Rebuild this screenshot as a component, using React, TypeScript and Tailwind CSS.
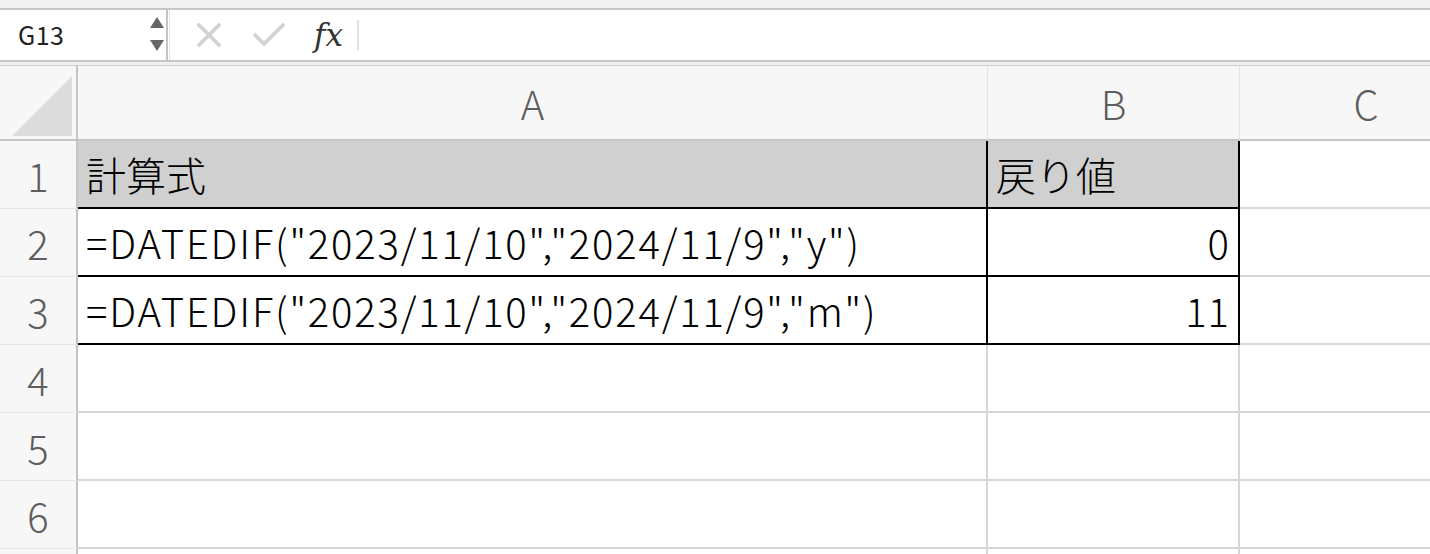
import React from 'react'

const FONT = "font-['Noto_Sans_CJK_JP','Noto_Sans',sans-serif]"

const ROWS: { n: string; a: string; b: string; header?: boolean; boxed?: boolean; right?: boolean }[] = [
  { n: '1', a: '計算式', b: '戻り値', header: true, boxed: true },
  { n: '2', a: '=DATEDIF("2023/11/10","2024/11/9","y")', b: '0', boxed: true, right: true },
  { n: '3', a: '=DATEDIF("2023/11/10","2024/11/9","m")', b: '11', boxed: true, right: true },
  { n: '4', a: '', b: '' },
  { n: '5', a: '', b: '' },
  { n: '6', a: '', b: '' },
  // row 7 only peeks in at the bottom edge
  { n: '', a: '', b: '' },
]

function FormulaBar() {
  return (
    <div className="flex h-[54px] border-t-2 border-b-2 border-[#c6c6c6] bg-white">
      {/* Name box */}
      <div className="flex w-[166px] items-center justify-between pl-[18px] pr-[2px]">
        <span className={`${FONT} text-[25px] tracking-[0.5px] text-[#222]`}>G13</span>
        <svg width="14" height="36" viewBox="0 0 14 36" className="text-[#666]">
          <path d="M7 0 L14 11 L0 11 Z" fill="currentColor" />
          <path d="M0 23 L14 23 L7 34 Z" fill="currentColor" />
        </svg>
      </div>
      <div className="w-[4px] border-l-2 border-r border-[#c4c4c4] border-r-[#e2e2e2]" />
      {/* Buttons */}
      <div className="flex items-center pl-[27px]">
        <svg width="24" height="24" viewBox="0 0 24 24" className="text-[#d2d2d2]">
          <path d="M2 2 L22 22 M22 2 L2 22" stroke="currentColor" strokeWidth="3.8" strokeLinecap="round" />
        </svg>
        <svg width="32" height="24" viewBox="0 0 32 24" className="ml-[32px] text-[#d2d2d2]">
          <path d="M2 12 L11 21 L30 2" stroke="currentColor" strokeWidth="3.8" strokeLinecap="round" strokeLinejoin="round" fill="none" />
        </svg>
        <span className="ml-[29px] font-['DejaVu_Serif','Liberation_Serif',serif] text-[31px] italic leading-none text-[#333]">fx</span>
        <div className="ml-[14px] h-[30px] w-[2px] bg-[#e0e0e0]" />
      </div>
      <div className="flex-1" />
    </div>
  )
}

function Corner() {
  return (
    <div className="flex items-end justify-end border-r-2 border-b-2 border-[#c4c4c4] bg-[#f7f7f7] pb-[3px] pr-[4px]">
      <svg width="60" height="60" viewBox="0 0 60 60">
        <path d="M0 60 L60 60 L60 0 Z" fill="#dcdcdc" />
      </svg>
    </div>
  )
}

export default function App() {
  return (
    <div className="h-[554px] w-[1430px] overflow-hidden bg-white">
      <div className="h-[8px] bg-[#f2f2f2]" />
      <FormulaBar />
      <div className="h-[4px] border-b border-[#cfcfcf] bg-[#efefef]" />

      <div className={`grid grid-cols-[78px_910px_252px_252px] grid-rows-[75px_repeat(7,68px)] font-light ${FONT}`}>
        <Corner />
        {['A', 'B', 'C'].map((c, i) => (
          <div
            key={c}
            className={`flex items-center justify-center border-b-2 border-[#c6c6c6] bg-[#f7f7f7] text-[40px] text-[#5e5e5e] ${
              i < 2 ? 'border-r border-r-[#e4e4e4]' : ''
            }`}
          >
            {c}
          </div>
        ))}

        {ROWS.map((r, i) => (
          <React.Fragment key={i}>
            <div className="flex items-center justify-center border-r-2 border-b border-[#c4c4c4] border-b-[#e6e6e6] bg-[#f7f7f7] text-[40px] text-[#5e5e5e]">
              {r.n}
            </div>
            <div
              className={`flex items-center whitespace-nowrap pl-[8px] text-[40px] text-black ${
                r.boxed ? 'border-r-2 border-b-2 border-black' : 'border-r-2 border-b-2 border-[#d6d6d6]'
              } ${r.header ? 'bg-[#d0d0d0]' : ''}`}
            >
              <span className={r.header ? '' : 'tracking-[1.8px]'}>{r.a}</span>
            </div>
            <div
              className={`flex items-center whitespace-nowrap px-[8px] text-[40px] text-black ${
                r.boxed ? 'border-r-2 border-b-2 border-black' : 'border-r-2 border-b-2 border-[#d6d6d6]'
              } ${r.header ? 'bg-[#d0d0d0]' : ''} ${r.right ? 'justify-end' : ''}`}
            >
              <span className={r.header ? '' : 'tracking-[1px]'}>{r.b}</span>
            </div>
            <div className="border-b-2 border-[#d6d6d6]" />
          </React.Fragment>
        ))}
      </div>
    </div>
  )
}
